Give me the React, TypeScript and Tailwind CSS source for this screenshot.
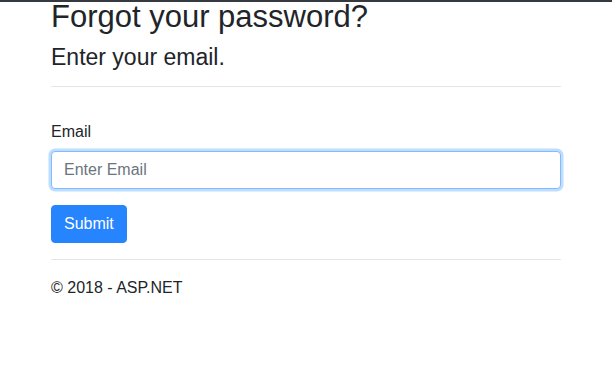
import React from "react";

export default function App() {
  return (
    <div className="relative min-h-[369px] w-full bg-white text-[#212529] font-['Liberation_Sans',Arial,sans-serif]">
      <div className="absolute left-0 top-0 h-[2px] w-full bg-[#343a40]" />
      <div className="mx-auto w-[510px]">
        <h2 className="text-[31px] leading-[34px] font-normal mb-[9px]">Forgot your password?</h2>
        <h4 className="text-[23px] leading-[28px] font-normal">Enter your email.</h4>
        <hr className="mt-[15px] border-0 border-t border-[#e5e5e5]" />
        <form className="mt-[33px]" onSubmit={(e) => e.preventDefault()}>
          <label className="block text-[16px] leading-[24px] mb-[7px]">Email</label>
          <input
            type="email"
            placeholder="Enter Email"
            className="block h-[38px] w-full rounded-[4px] border border-[#80bdff] bg-white px-[12px] text-[16px] leading-[24px] text-[#495057] placeholder:text-[#6c757d] outline-none shadow-[0_0_0_2.5px_rgba(0,123,255,0.25)]"
          />
          <button
            type="submit"
            className="mt-[16px] h-[38px] rounded-[4px] border border-[#2684ff] bg-[#2684ff] px-[12px] text-[16px] leading-[24px] text-white"
          >
            Submit
          </button>
        </form>
        <hr className="mt-[16px] border-0 border-t border-[#e5e5e5]" />
        <footer className="mt-[16px] text-[16px] leading-[24px]">© 2018 - ASP.NET</footer>
      </div>
    </div>
  );
}
